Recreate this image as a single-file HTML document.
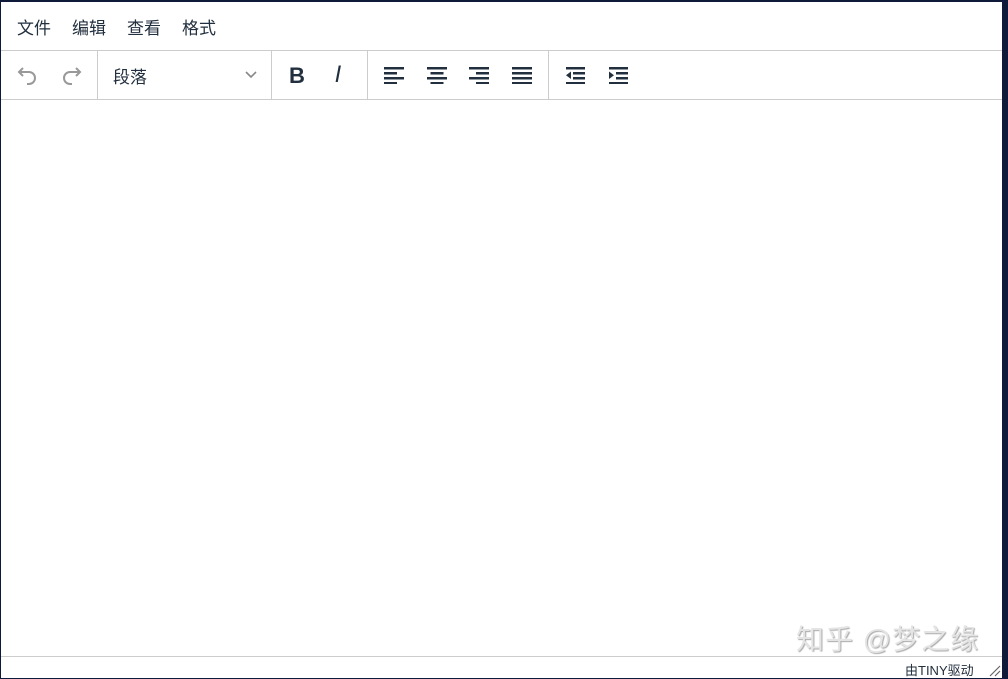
<!DOCTYPE html>
<html><head><meta charset="utf-8"><style>
*{margin:0;padding:0;box-sizing:border-box}
body{width:1008px;height:678px;background:#0f1a3a;position:relative;overflow:hidden;font-family:"Liberation Sans","Noto Sans CJK SC",sans-serif;color:#222f3e}
#ed{position:absolute;left:1px;top:2px;width:1001px;height:676px;background:#fff}
.menu{height:49px;border-bottom:1px solid #ccc;position:relative}
.menu span{position:absolute;top:12px;font-size:17px;color:#222f3e}
.tb{height:49px;border-bottom:1px solid #ccc;position:relative}
.sep{position:absolute;top:0;width:1px;height:48px;background:#ccc}
.ic{position:absolute;top:14px}
.foot{position:absolute;left:0;top:654px;width:1001px;height:22px;border-top:1px solid #ccc;font-size:13px;color:#222f3e}
.wm{position:absolute;left:795px;top:616px;font-size:28px;color:#e4e4e4;text-shadow:1px 1px 1px #aaa;letter-spacing:1px}
</style></head><body>
<div id="ed">
<div class="menu"><span style="left:16px">文件</span><span style="left:71px">编辑</span><span style="left:126px">查看</span><span style="left:181px">格式</span></div>
<div class="tb">
<svg class="ic" style="left:15px" width="24" height="22" viewBox="0 0 24 22" fill="none" stroke="#999" stroke-width="2"><path d="M7 3L3 7l4 4M3 7h10a6 6 0 0 1 0 12h-2"/></svg>
<svg class="ic" style="left:58px" width="24" height="22" viewBox="0 0 24 22" fill="none" stroke="#999" stroke-width="2"><path d="M17 3l4 4-4 4M21 7H11a6 6 0 0 0 0 12h2"/></svg>
<div class="sep" style="left:96px"></div>
<span style="position:absolute;left:112px;top:12px;font-size:17px">段落</span>
<svg class="ic" style="left:243px;top:19px" width="14" height="10" viewBox="0 0 14 10" fill="none" stroke="#888" stroke-width="1.6"><path d="M2 2l5 5 5-5"/></svg>
<div class="sep" style="left:270px"></div>
<span style="position:absolute;left:288px;top:12px;font-size:22px;font-weight:bold">B</span>
<span style="position:absolute;left:334px;top:12px;font-size:22px;font-style:italic;font-family:'DejaVu Sans',sans-serif;font-weight:300">I</span>
<div class="sep" style="left:366px"></div>
<svg class="ic" style="left:383px;top:15px" width="22" height="18" viewBox="0 0 22 18" fill="#222f3e"><rect x="0" y="1" width="20" height="2.5"/><rect x="0" y="6" width="13" height="2.5"/><rect x="0" y="11" width="20" height="2.5"/><rect x="0" y="16" width="13" height="2.5"/></svg>
<svg class="ic" style="left:426px;top:15px" width="22" height="18" viewBox="0 0 22 18" fill="#222f3e"><rect x="0" y="1" width="20" height="2.5"/><rect x="3.5" y="6" width="13" height="2.5"/><rect x="0" y="11" width="20" height="2.5"/><rect x="3.5" y="16" width="13" height="2.5"/></svg>
<svg class="ic" style="left:468px;top:15px" width="22" height="18" viewBox="0 0 22 18" fill="#222f3e"><rect x="0" y="1" width="20" height="2.5"/><rect x="7" y="6" width="13" height="2.5"/><rect x="0" y="11" width="20" height="2.5"/><rect x="7" y="16" width="13" height="2.5"/></svg>
<svg class="ic" style="left:511px;top:15px" width="22" height="18" viewBox="0 0 22 18" fill="#222f3e"><rect x="0" y="1" width="20" height="2.5"/><rect x="0" y="6" width="20" height="2.5"/><rect x="0" y="11" width="20" height="2.5"/><rect x="0" y="16" width="20" height="2.5"/></svg>
<div class="sep" style="left:547px"></div>
<svg class="ic" style="left:564px;top:15px" width="22" height="18" viewBox="0 0 22 18" fill="#222f3e"><rect x="1" y="1" width="19" height="2.5"/><rect x="8" y="6" width="12" height="2.5"/><rect x="8" y="11" width="12" height="2.5"/><rect x="1" y="16" width="19" height="2.5"/><path d="M6 5.5L1 9.2 6 13z"/></svg>
<svg class="ic" style="left:607px;top:15px" width="22" height="18" viewBox="0 0 22 18" fill="#222f3e"><rect x="1" y="1" width="19" height="2.5"/><rect x="8" y="6" width="12" height="2.5"/><rect x="8" y="11" width="12" height="2.5"/><rect x="1" y="16" width="19" height="2.5"/><path d="M1 5.5L6 9.2 1 13z"/></svg>
</div>
<div class="wm">知乎 @梦之缘</div>
<div class="foot"><span style="position:absolute;left:904px;top:3px">由TINY驱动</span>
<svg style="position:absolute;left:988px;top:8px" width="12" height="12" viewBox="0 0 12 12" stroke="#666" stroke-width="1.2"><path d="M1 11L11 1M6 11l5-5"/></svg></div>
</div>
</body></html>
